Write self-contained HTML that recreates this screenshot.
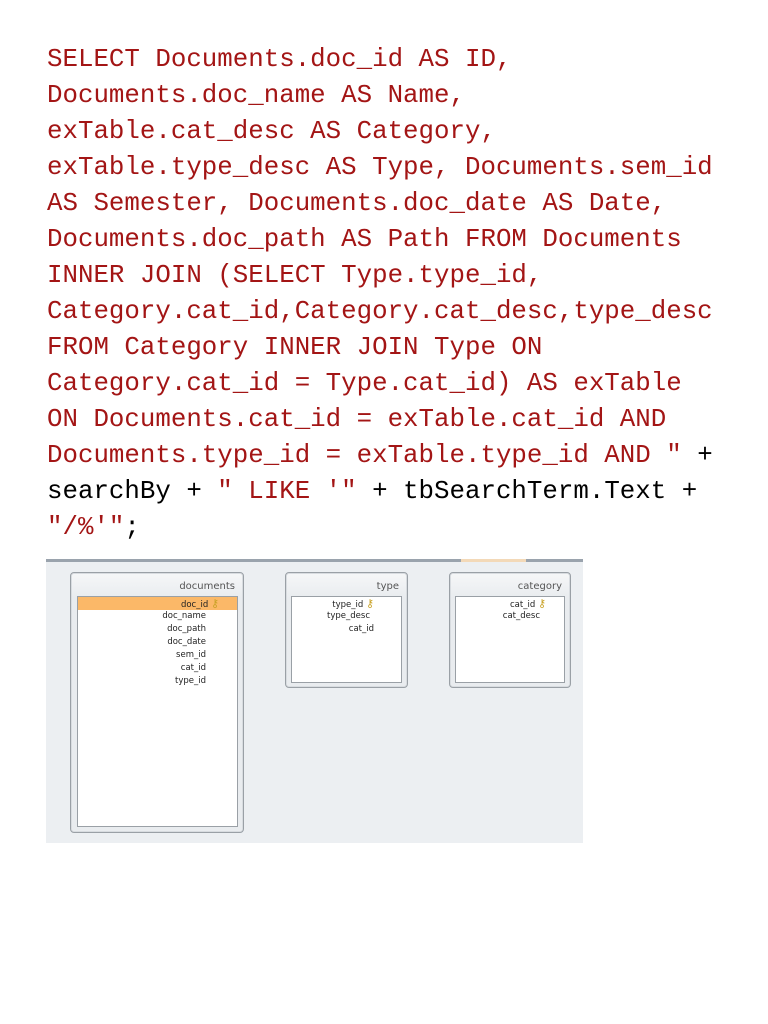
<!DOCTYPE html>
<html><head><meta charset="utf-8"><style>
body{margin:0;width:768px;height:1024px;background:#fff;position:relative;overflow:hidden}
pre{position:absolute;left:47px;top:42px;margin:0;font-family:"Liberation Mono",monospace;font-size:25.8px;line-height:36px;color:#000}
.r{color:#a31515}
.img{position:absolute;left:46px;top:559px;width:537px;height:284px;background:#eceff2}
.bar{position:absolute;left:0;top:0;width:537px;height:3px;background:#9aa3ad}
.bar2{position:absolute;left:415px;top:0;width:65px;height:3px;background:#f3d9b8}
.box{position:absolute;border:1px solid #9aa0a6;border-radius:4px;background:linear-gradient(#f6f7f8,#e9ecef 25px,#e9ecef);box-shadow:0 0 0 1px #d8dce0 inset}
.t{position:absolute;right:8px;top:8px;font-family:"DejaVu Sans",sans-serif;font-size:10px;color:#555}
.in{position:absolute;background:#fff;border:1px solid #9aa0a6}
.row{font-family:"DejaVu Sans",sans-serif;font-size:8.5px;height:13px;line-height:13px;text-align:right;color:#222}
.k{color:#c9a227;font-size:11px;font-weight:bold}
</style></head><body>
<pre><span class="r">SELECT Documents.doc_id AS ID,
Documents.doc_name AS Name,
exTable.cat_desc AS Category,
exTable.type_desc AS Type, Documents.sem_id
AS Semester, Documents.doc_date AS Date,
Documents.doc_path AS Path FROM Documents
INNER JOIN (SELECT Type.type_id,
Category.cat_id,Category.cat_desc,type_desc
FROM Category INNER JOIN Type ON
Category.cat_id = Type.cat_id) AS exTable
ON Documents.cat_id = exTable.cat_id AND
Documents.type_id = exTable.type_id AND "</span> +
searchBy + <span class="r">" LIKE '"</span> + tbSearchTerm.Text +
<span class="r">"/%'"</span>;</pre>
<div class="img">
<div class="bar"></div><div class="bar2"></div>
<div class="box" style="left:24px;top:13px;width:172px;height:259px">
<div class="t">documents</div>
<div class="in" style="left:6px;top:23px;width:159px;height:229px">
<div class="row" style="background:#fbb868;padding-right:0"><span style="padding-right:18px">doc_id <span class="k">⚷</span></span></div>
<div style="padding-right:31px">
<div class="row">doc_name</div><div class="row">doc_path</div><div class="row">doc_date</div><div class="row">sem_id</div><div class="row">cat_id</div><div class="row">type_id</div>
</div></div></div>
<div class="box" style="left:239px;top:13px;width:121px;height:114px">
<div class="t">type</div>
<div class="in" style="left:5px;top:23px;width:109px;height:85px;padding-right:0">
<div style="padding-right:27px"><div class="row">type_id <span class="k">⚷</span></div><div class="row" style="padding-right:4px">type_desc</div><div class="row">cat_id</div></div>
</div></div>
<div class="box" style="left:403px;top:13px;width:120px;height:114px">
<div class="t">category</div>
<div class="in" style="left:5px;top:23px;width:108px;height:85px">
<div style="padding-right:18px"><div class="row">cat_id <span class="k">⚷</span></div><div class="row" style="padding-right:6px">cat_desc</div></div>
</div></div>
</div>
</body></html>
